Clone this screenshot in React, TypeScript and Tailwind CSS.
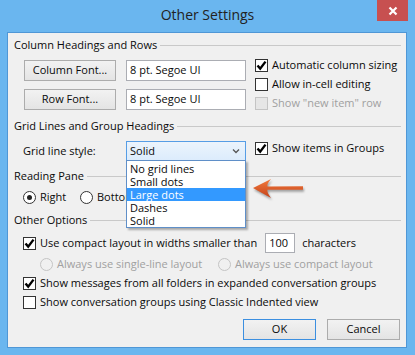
import React from "react";

function Check({ checked, disabled }: { checked?: boolean; disabled?: boolean }) {
  return (
    <span
      className={`w-[13px] h-[13px] shrink-0 border flex items-center justify-center ${
        disabled ? "border-[#c4c4c4] bg-[#e6e6e6]" : "border-[#333] bg-white"
      }`}
    >
      {checked && (
        <svg width="11" height="11" viewBox="0 0 11 11">
          <path d="M1.5 5.5 L4.2 8.6 L9.5 1.6" fill="none" stroke="#000" strokeWidth="2.4" />
        </svg>
      )}
    </span>
  );
}

function Radio({ checked, disabled }: { checked?: boolean; disabled?: boolean }) {
  return (
    <span
      className={`w-[13px] h-[13px] shrink-0 rounded-full border flex items-center justify-center ${
        disabled ? "border-[#c4c4c4] bg-[#f0f0f0]" : "border-[#333] bg-white"
      }`}
    >
      {checked && <span className="w-[5px] h-[5px] rounded-full bg-[#222]" />}
    </span>
  );
}

function Group({ title }: { title: string }) {
  return (
    <div className="flex items-center h-[16px] pl-[6px] pr-[5px]">
      <span className="leading-[16px]">{title}</span>
      <div className="flex-1 ml-[3px] h-px bg-[#c9c9c9]" />
    </div>
  );
}

function Btn({ label, primary }: { label: string; primary?: boolean }) {
  return (
    <div
      className={`h-[21px] flex items-center justify-center border bg-gradient-to-b from-[#f2f2f2] to-[#e4e4e4] ${
        primary ? "border-[#3c8fe0]" : "border-[#acacac]"
      } ${label.length > 6 ? "w-[92px]" : "w-[73px]"}`}
    >
      {label}
    </div>
  );
}

function TextBox({ value }: { value: string }) {
  return (
    <div className="w-[120px] h-[21px] border border-[#abadb3] bg-white flex items-center pl-[3px]">
      {value}
    </div>
  );
}

function CheckRow({ label, checked, disabled, h = "h-[16px]" }: { label: string; checked?: boolean; disabled?: boolean; h?: string }) {
  return (
    <div className={`${h} flex items-center gap-[4px] ${disabled ? "text-[#a0a0a0]" : ""}`}>
      <Check checked={checked} disabled={disabled} />
      <span className="whitespace-nowrap">{label}</span>
    </div>
  );
}

const ITEMS = ["No grid lines", "Small dots", "Large dots", "Dashes", "Solid"];

export default function App() {
  return (
    <div className="w-[415px] h-[355px] bg-[#6ab6ef] font-['Open_Sans',sans-serif] text-[11px] text-[#0a0a0a] overflow-hidden">
      {/* title bar */}
      <div className="relative h-[32px] flex justify-center pt-[6px]">
        <span className="text-[14px] leading-[18px] text-[#222]">Other Settings</span>
        <div className="absolute top-0 right-[7px] w-[31px] h-[21px] bg-[#c75050] flex items-center justify-center">
          <svg width="10" height="10" viewBox="0 0 10 10">
            <path d="M1.5 1.5 L8.5 8.5 M8.5 1.5 L1.5 8.5" stroke="#fff" strokeWidth="2.2" />
          </svg>
        </div>
      </div>

      <div className="relative ml-[7px] w-[400px] h-[316px] border border-[#4f97d6] bg-[#f0f0f0]">
        <div className="mt-[4px]">
          <Group title="Column Headings and Rows" />
        </div>
        <div className="flex items-start">
          <div className="mt-[7px] ml-[16px] flex flex-col gap-[8px]">
            <div className="flex gap-[10px]">
              <Btn label="Column Font..." />
              <TextBox value="8 pt. Segoe UI" />
            </div>
            <div className="flex gap-[10px]">
              <Btn label="Row Font..." />
              <TextBox value="8 pt. Segoe UI" />
            </div>
          </div>
          <div className="mt-[3px] ml-[9px] flex flex-col">
            <CheckRow h="h-[19px]" checked label="Automatic column sizing" />
            <CheckRow h="h-[19px]" label="Allow in-cell editing" />
            <CheckRow h="h-[19px]" disabled label={'Show "new item" row'} />
          </div>
        </div>

        <div className="mt-[5px]">
          <Group title="Grid Lines and Group Headings" />
        </div>
        <div className="mt-[7px] flex items-start h-[20px]">
          <div className="ml-[15px] w-[103px] h-[20px] flex items-center">Grid line style:</div>
          <div className="w-[120px] h-[20px] border border-[#569de5] bg-gradient-to-b from-[#ecf4fc] to-[#dcecfc] flex items-center pl-[3px] pr-[5px]">
            <span className="flex-1">Solid</span>
            <svg width="8" height="6" viewBox="0 0 8 6">
              <path d="M1 1.5 L4 4.5 L7 1.5" fill="none" stroke="#555" strokeWidth="1.3" />
            </svg>
          </div>
          <div className="ml-[9px]">
            <CheckRow h="h-[14px]" checked label="Show items in Groups" />
          </div>
        </div>

        <div className="mt-[7px]">
          <Group title="Reading Pane" />
        </div>
        <div className="mt-[5px] h-[16px] flex items-center ml-[15px]">
          <div className="w-[57px] flex items-center gap-[4px]">
            <Radio checked />
            <span>Right</span>
          </div>
          <div className="flex items-center gap-[4px]">
            <Radio />
            <span>Bottom</span>
          </div>
        </div>

        <div className="mt-[7px]">
          <Group title="Other Options" />
        </div>
        <div className="mt-[5px] h-[20px] flex items-center ml-[15px]">
          <CheckRow checked label="Use compact layout in widths smaller than" />
          <div className="ml-[8px] w-[30px] h-[20px] border border-[#abadb3] bg-white flex items-center pl-[3px]">100</div>
          <span className="ml-[7px]">characters</span>
        </div>
        <div className="mt-[3px] h-[16px] flex items-center ml-[32px] text-[#a0a0a0]">
          <div className="w-[178px] flex items-center gap-[4px]">
            <Radio disabled />
            <span>Always use single-line layout</span>
          </div>
          <div className="flex items-center gap-[4px]">
            <Radio disabled />
            <span>Always use compact layout</span>
          </div>
        </div>
        <div className="mt-[3px] ml-[15px]">
          <CheckRow checked label="Show messages from all folders in expanded conversation groups" />
        </div>
        <div className="mt-[3px] ml-[15px]">
          <CheckRow label="Show conversation groups using Classic Indented view" />
        </div>
        <div className="mt-[9px] flex justify-end pr-[6px] gap-[11px]">
          <Btn primary label="OK" />
          <Btn label="Cancel" />
        </div>

        {/* open dropdown list */}
        <div className="absolute left-[118px] top-[127px] w-[120px] border border-[#5f8fc8] bg-white pt-[1px] shadow-[2px_2px_2px_rgba(0,0,0,0.3)]">
          {ITEMS.map((it) => (
            <div
              key={it}
              className={`h-[13px] leading-[13px] pl-[3px] ${it === "Large dots" ? "bg-[#3399ff] text-white" : ""}`}
            >
              {it}
            </div>
          ))}
        </div>

        {/* pointer arrow */}
        <svg
          className="absolute left-[243px] top-[143px] drop-shadow-[1px_2px_1px_rgba(0,0,0,0.35)]"
          width="56"
          height="26"
          viewBox="0 0 56 26"
        >
          <defs>
            <linearGradient id="ag" x1="0" y1="0" x2="0" y2="1">
              <stop offset="0" stopColor="#f27a3c" />
              <stop offset="1" stopColor="#c4421a" />
            </linearGradient>
          </defs>
          <path
            d="M2 12 L20 3 Q15.5 8.5 16.5 10.5 L52 10.2 L52 13.8 L16.5 13.8 Q15.5 16 20 22 Z"
            fill="url(#ag)"
          />
        </svg>
      </div>
    </div>
  );
}
